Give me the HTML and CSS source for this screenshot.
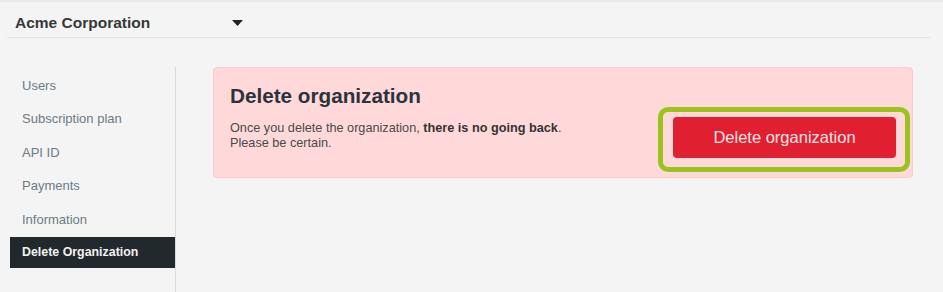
FILE: index.html
```html
<!DOCTYPE html>
<html lang="en">
<head>
  <meta charset="UTF-8">
  <meta name="viewport" content="width=device-width, initial-scale=1.0">
  <title>Acme Corporation - Settings</title>
  <link rel="stylesheet" href="styles.css">
</head>
<body>

  <div class="topbar"></div>

  <div class="org-header">
    <span class="org-name">Acme Corporation</span>
    <svg class="caret" width="11" height="6" viewBox="0 0 11 6">
      <path d="M0 0 L11 0 L5.5 6 Z" fill="#222"/>
    </svg>
  </div>

  <div class="main">
    <ul class="sidebar">
      <li class="menu-item">Users</li>
      <li class="menu-item">Subscription plan</li>
      <li class="menu-item">API ID</li>
      <li class="menu-item">Payments</li>
      <li class="menu-item">Information</li>
      <li class="menu-item active">Delete Organization</li>
    </ul>

    <div class="content">
      <div class="danger-card">
        <div class="danger-text">
          <h2>Delete organization</h2>
          <p>Once you delete the organization, <strong>there is no going back</strong>.<br>Please be certain.</p>
        </div>
        <div class="highlight">
          <button class="delete-button">Delete organization</button>
        </div>
      </div>
    </div>
  </div>

</body>
</html>
```

FILE: styles.css
```css
body {
  font-family: "Liberation Sans", Arial, sans-serif;
  background-color: #f4f4f4;
  margin: 0;
  height: 292px;
  overflow: hidden;
}
.topbar {
  height: 2px;
  background-color: #e8e8e8;
}
.org-header {
  display: flex;
  align-items: flex-start;
  height: 36px;
  box-sizing: border-box;
  margin: 0 13px 0 7px;
  padding: 11px 0 0 8px;
  border-bottom: 1px solid #e2e2e2;
}
.org-name {
  width: 217px;
  font-size: 15.5px;
  line-height: 20px;
  font-weight: bold;
  color: #383838;
}
.caret {
  display: block;
  margin-top: 7px;
}
.main {
  display: flex;
  margin-top: 29px;
}
.sidebar {
  list-style: none;
  margin: 0 0 0 10px;
  padding: 2.5px 0 0 0;
  width: 165px;
  height: 230px;
  border-right: 1px solid #dcdad6;
  display: flex;
  flex-direction: column;
  gap: 2.5px;
}
.menu-item {
  font-size: 13px;
  line-height: 15px;
  padding: 8px 12px;
  color: #6c7a84;
}
.menu-item.active {
  background-color: #22292d;
  color: #f2f2f2;
  font-weight: bold;
  font-size: 12.4px;
}
.content {
  padding-left: 37px;
}
.danger-card {
  display: flex;
  justify-content: space-between;
  width: 700px;
  height: 111px;
  box-sizing: border-box;
  padding: 16px 16px 19px 16px;
  background-color: #ffd9d9;
  border: 1px solid #fccaca;
  border-radius: 4px;
}
.danger-text h2 {
  margin: 0;
  font-size: 20.7px;
  line-height: 24px;
  color: #2a343a;
}
.danger-text p {
  margin: 13px 0 0 0;
  font-size: 12.7px;
  line-height: 15px;
  color: #4a4a4a;
}
.danger-text strong {
  color: #333;
}
.highlight {
  position: relative;
  align-self: flex-end;
}
.highlight::after {
  content: "";
  position: absolute;
  top: -10px;
  right: -14px;
  bottom: -14px;
  left: -15px;
  border: 5px solid #9bc21d;
  border-radius: 10px;
  pointer-events: none;
}
.delete-button {
  display: block;
  width: 223px;
  height: 41px;
  padding: 0;
  background-color: #e01f30;
  color: #fbe3e5;
  border: none;
  border-radius: 4px;
  font-family: "Liberation Sans", Arial, sans-serif;
  font-size: 16.5px;
  cursor: pointer;
}
```
